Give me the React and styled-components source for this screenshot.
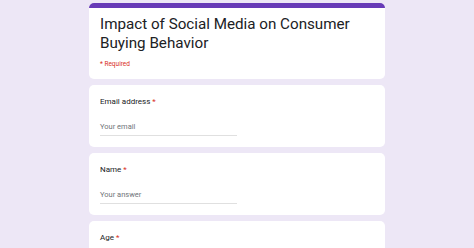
import React from "react";
import styled, { createGlobalStyle } from "styled-components";

const Global = createGlobalStyle`
  html, body { margin: 0; padding: 0; background: #ede7f6; }
  body { font-family: Roboto, "Noto Sans", Arial, sans-serif; overflow: hidden; }
`;

const Page = styled.div`
  width: 474px;
  height: 248px;
  background: #ede7f6;
  padding: 3px 0 0 89px;
  box-sizing: border-box;
  display: flex;
  flex-direction: column;
  gap: 6px;
  overflow: hidden;
`;

const Card = styled.div`
  width: 296px;
  height: ${(p) => p.$h}px;
  flex: none;
  background: #fff;
  border-radius: 5px;
  box-sizing: border-box;
  overflow: hidden;
  display: flex;
  flex-direction: column;
`;

const TopBar = styled.div`
  height: 5px;
  background: #673ab7;
  flex: none;
`;

const HeaderBody = styled.div`
  padding: 7px 11px 0 11px;
  display: flex;
  flex-direction: column;
`;

const Title = styled.h1`
  margin: 0;
  font-family: Roboto, "Open Sans", sans-serif;
  font-weight: 400;
  font-size: 15.2px;
  line-height: 19px;
  color: #202124;
  white-space: nowrap;
`;

const Required = styled.div`
  margin-top: 7px;
  font-size: 6.5px;
  line-height: 8px;
  color: #d93025;
`;

const QuestionBody = styled.div`
  padding: 12px 11px 0 11px;
  display: flex;
  flex-direction: column;
`;

const Label = styled.div`
  font-size: 8px;
  line-height: 10px;
  color: #202124;
  span { color: #d93025; }
`;

const Field = styled.div`
  margin-top: 15px;
  width: 137px;
  border-bottom: 1px solid #e0e0e0;
  font-size: 7.5px;
  line-height: 10px;
  padding-bottom: 3px;
  color: #70757a;
`;

function Question({ label, placeholder, h }) {
  return (
    <Card $h={h}>
      <QuestionBody>
        <Label>
          {label} <span>*</span>
        </Label>
        {placeholder && <Field>{placeholder}</Field>}
      </QuestionBody>
    </Card>
  );
}

export default function App() {
  return (
    <>
      <Global />
      <Page>
        <Card $h={76}>
          <TopBar />
          <HeaderBody>
            <Title>
              Impact of Social Media on Consumer
              <br />
              Buying Behavior
            </Title>
            <Required>* Required</Required>
          </HeaderBody>
        </Card>
        <Question label="Email address" placeholder="Your email" h={62} />
        <Question label="Name" placeholder="Your answer" h={62} />
        <Question label="Age" h={62} />
      </Page>
    </>
  );
}
